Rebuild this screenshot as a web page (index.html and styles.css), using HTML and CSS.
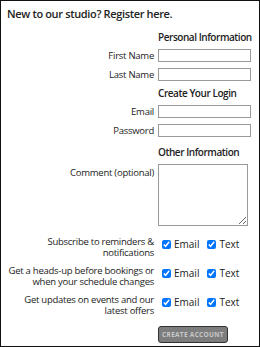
FILE: index.html
```html
<!DOCTYPE html>
<html lang="en">
<head>
  <meta charset="UTF-8" />
  <title>Register</title>
  <link rel="stylesheet" href="styles.css">
</head>
<body>
  <div class="page">
    <h1>New to our studio? Register here.</h1>
    <form class="form">
      <div class="row"><span></span><h2>Personal Information</h2></div>
      <div class="row"><label class="lbl" for="first">First Name</label><input class="field" id="first" type="text"></div>
      <div class="row"><label class="lbl" for="last">Last Name</label><input class="field" id="last" type="text"></div>

      <div class="row"><span></span><h2>Create Your Login</h2></div>
      <div class="row"><label class="lbl" for="email">Email</label><input class="field" id="email" type="text"></div>
      <div class="row"><label class="lbl" for="pass">Password</label><input class="field" id="pass" type="password"></div>

      <div class="row other"><span></span><h2>Other Information</h2></div>
      <div class="row"><label class="lbl top" for="comment">Comment (optional)</label><textarea class="comment" id="comment"></textarea></div>

      <div class="row pref first-pref">
        <div class="lbl">Subscribe to reminders &amp; notifications</div>
        <div class="checks">
          <label><input type="checkbox" checked> Email</label>
          <label><input type="checkbox" checked> Text</label>
        </div>
      </div>
      <div class="row pref">
        <div class="lbl">Get a heads-up before bookings or when your schedule changes</div>
        <div class="checks">
          <label><input type="checkbox" checked> Email</label>
          <label><input type="checkbox" checked> Text</label>
        </div>
      </div>
      <div class="row pref">
        <div class="lbl">Get updates on events and our latest offers</div>
        <div class="checks">
          <label><input type="checkbox" checked> Email</label>
          <label><input type="checkbox" checked> Text</label>
        </div>
      </div>

      <div class="row submit"><span></span><button type="button" class="btn">Create Account</button></div>
    </form>
  </div>
</body>
</html>
```

FILE: styles.css
```css
body {
  margin: 0;
  font-family: "Open Sans", sans-serif;
  color: #222;
}
.page {
  box-sizing: border-box;
  width: 260px;
  height: 347px;
  border: 1px solid #111;
  padding: 5px 0 0 6px;
}
h1 {
  margin: 0;
  font-size: 11px;
  font-weight: 600;
  line-height: 16px;
  letter-spacing: -0.35px;
}
.form {
  display: flex;
  flex-direction: column;
  gap: 6px;
  margin-top: 9px;
}
.row {
  display: grid;
  grid-template-columns: 147px 1fr;
  column-gap: 4px;
  align-items: center;
}
.row.other {
  margin-top: 3px;
}
.row.pref {
  margin-top: 1px;
  align-items: start;
}
.row.first-pref {
  margin-top: 4px;
}
.row.submit {
  margin-top: 4px;
}
h2 {
  margin: 0;
  font-size: 10px;
  font-weight: 600;
  line-height: 12px;
  letter-spacing: -0.45px;
  white-space: nowrap;
}
.lbl {
  text-align: right;
  font-size: 9.5px;
  line-height: 11px;
  letter-spacing: -0.25px;
}
.lbl.top {
  align-self: start;
  padding-top: 3px;
}
.field {
  box-sizing: border-box;
  width: 93px;
  height: 13px;
  margin: 0;
  border: 1px solid #9a9a9a;
  padding: 0;
}
.comment {
  box-sizing: border-box;
  width: 90px;
  height: 62px;
  margin: 0;
  border: 1px solid #9a9a9a;
  padding: 0;
  resize: both;
}
.checks {
  display: flex;
  gap: 4px;
  padding-top: 2px;
  font-size: 10px;
  line-height: 13px;
}
.checks label {
  display: flex;
  align-items: center;
  gap: 3px;
}
.checks input {
  width: 9px;
  height: 9px;
  margin: 0 0 0 4px;
}
.btn {
  display: block;
  width: 70px;
  height: 17px;
  padding: 0;
  background: #7d7d7d;
  border: 1px solid #333;
  border-radius: 3px;
  color: #c8c8c8;
  font-family: "Open Sans", sans-serif;
  font-size: 6.5px;
  font-weight: 700;
  line-height: 15px;
  text-transform: uppercase;
  letter-spacing: 0.3px;
}
```
